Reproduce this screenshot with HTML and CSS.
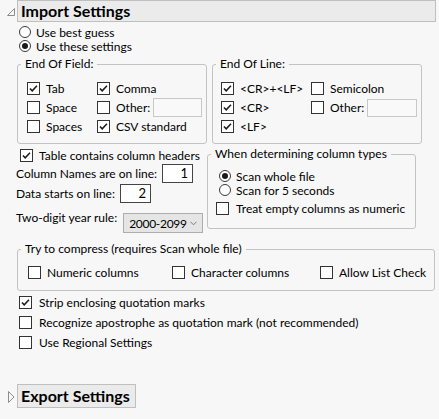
FILE: index.html
```html
<!DOCTYPE html>
<html>
<head>
<meta charset="utf-8">
<link rel="stylesheet" href="styles.css">
</head>
<body>
<div class="outline">
  <span class="tri"><svg width="10" height="22" viewBox="0 0 10 22"><polygon points="7.5,8.5 7.5,15.5 0.5,15.5" fill="none" stroke="#8c8c8c" stroke-width="1"/></svg></span>
  <div class="outline-title">Import Settings</div>
</div>

<div class="content">
  <div class="radio-list">
    <div class="opt"><span class="radio"></span><span>Use best guess</span></div>
    <div class="opt"><span class="radio on"></span><span>Use these settings</span></div>
  </div>

  <div class="top-groups">
    <fieldset class="group eof">
      <legend>End Of Field:</legend>
      <div class="grid eof-grid">
        <div class="cbopt"><span class="cb"><svg viewBox="0 0 13 13"><path d="M2.3 6.4 L5 9.2 L10.6 3.3"/></svg></span><span>Tab</span></div>
        <div class="cbopt"><span class="cb"><svg viewBox="0 0 13 13"><path d="M2.3 6.4 L5 9.2 L10.6 3.3"/></svg></span><span>Comma</span></div>
        <div class="cbopt"><span class="cb"></span><span>Space</span></div>
        <div class="cbopt"><span class="cb"></span><span>Other:</span><span class="txt other"></span></div>
        <div class="cbopt"><span class="cb"></span><span>Spaces</span></div>
        <div class="cbopt"><span class="cb"><svg viewBox="0 0 13 13"><path d="M2.3 6.4 L5 9.2 L10.6 3.3"/></svg></span><span>CSV standard</span></div>
      </div>
    </fieldset>
    <fieldset class="group eol">
      <legend>End Of Line:</legend>
      <div class="grid eol-grid">
        <div class="cbopt"><span class="cb"><svg viewBox="0 0 13 13"><path d="M2.3 6.4 L5 9.2 L10.6 3.3"/></svg></span><span class="ang">&lt;CR&gt;+&lt;LF&gt;</span></div>
        <div class="cbopt"><span class="cb"></span><span>Semicolon</span></div>
        <div class="cbopt"><span class="cb"><svg viewBox="0 0 13 13"><path d="M2.3 6.4 L5 9.2 L10.6 3.3"/></svg></span><span class="ang">&lt;CR&gt;</span></div>
        <div class="cbopt"><span class="cb"></span><span>Other:</span><span class="txt other2"></span></div>
        <div class="cbopt"><span class="cb"><svg viewBox="0 0 13 13"><path d="M2.3 6.4 L5 9.2 L10.6 3.3"/></svg></span><span class="ang">&lt;LF&gt;</span></div>
      </div>
    </fieldset>
  </div>

  <div class="mid">
    <div class="mid-left">
      <div class="cbopt headers"><span class="cb"><svg viewBox="0 0 13 13"><path d="M2.3 6.4 L5 9.2 L10.6 3.3"/></svg></span><span>Table contains column headers</span></div>
      <div class="field"><span>Column Names are on line:</span><span class="num">1</span></div>
      <div class="field"><span>Data starts on line:</span><span class="num">2</span></div>
      <div class="field year"><span class="year-label">Two-digit year rule:</span>
        <span class="select"><span>2000-2099</span><svg width="7" height="5" viewBox="0 0 7 5"><path d="M0.5 0.8 L3.5 3.8 L6.5 0.8" fill="none" stroke="#7a7a7a" stroke-width="1"/></svg></span>
      </div>
    </div>
    <fieldset class="group types">
      <legend>When determining column types</legend>
      <div class="types-body">
        <div class="opt"><span class="radio on"></span><span>Scan whole file</span></div>
        <div class="opt"><span class="radio"></span><span>Scan for 5 seconds</span></div>
        <div class="cbopt treat"><span class="cb"></span><span>Treat empty columns as numeric</span></div>
      </div>
    </fieldset>
  </div>

  <fieldset class="group compress">
    <legend>Try to compress (requires Scan whole file)</legend>
    <div class="compress-body">
      <div class="cbopt"><span class="cb"></span><span>Numeric columns</span></div>
      <div class="cbopt"><span class="cb"></span><span>Character columns</span></div>
      <div class="cbopt"><span class="cb"></span><span>Allow List Check</span></div>
    </div>
  </fieldset>

  <div class="checks">
    <div class="cbopt"><span class="cb"><svg viewBox="0 0 13 13"><path d="M2.3 6.4 L5 9.2 L10.6 3.3"/></svg></span><span>Strip enclosing quotation marks</span></div>
    <div class="cbopt"><span class="cb"></span><span>Recognize apostrophe as quotation mark (not recommended)</span></div>
    <div class="cbopt"><span class="cb"></span><span>Use Regional Settings</span></div>
  </div>
</div>

<div class="outline closed">
  <span class="tri"><svg width="10" height="24" viewBox="0 0 10 24"><polygon points="1.5,7.5 1.5,18.5 7,13" fill="none" stroke="#8c8c8c" stroke-width="1"/></svg></span>
  <div class="outline-title">Export Settings</div>
</div>
</body>
</html>
```

FILE: styles.css
```css
html, body {
  margin: 0;
  padding: 0;
}
body {
  background: #f7f7f7;
  font-family: Lato, "Liberation Sans", sans-serif;
  font-size: 12px;
  color: #000;
  width: 439px;
  height: 419px;
  overflow: hidden;
}

/* outline headers */
.outline {
  display: flex;
  align-items: stretch;
  padding-left: 7px;
  height: 22px;
}
.tri {
  width: 10px;
  display: block;
}
.tri svg { display: block; }
.outline-title {
  flex: 1;
  margin-right: 3px;
  box-sizing: border-box;
  border: 1px solid #bfbfbf;
  background: #ebebeb;
  font-weight: bold;
  font-size: 16px;
  line-height: 20px;
  padding-left: 3px;
}
.outline.closed {
  margin-top: 32px;
  height: 24px;
}
.outline.closed .outline-title {
  flex: none;
  width: 119px;
  line-height: 22px;
}

.content {
  padding-left: 17px;
}

/* radios */
.radio-list {
  margin-top: 3px;
}
.opt {
  display: flex;
  align-items: center;
  height: 14px;
  gap: 5px;
  margin-left: 2px;
}
.radio {
  width: 12px;
  height: 12px;
  box-sizing: border-box;
  border: 1px solid #3a3a3a;
  border-radius: 50%;
  background: #fff;
  display: flex;
  align-items: center;
  justify-content: center;
  flex: none;
}
.radio.on::after {
  content: "";
  width: 6px;
  height: 6px;
  border-radius: 50%;
  background: #1a1a1a;
}

/* checkbox */
.cbopt {
  display: flex;
  align-items: center;
  gap: 6px;
}
.cb {
  width: 13px;
  height: 13px;
  box-sizing: border-box;
  border: 1px solid #333;
  background: #fff;
  flex: none;
  display: block;
}
.cb svg {
  display: block;
  width: 11px;
  height: 11px;
  fill: none;
  stroke: #1a1a1a;
  stroke-width: 1.8;
}

/* group boxes */
fieldset.group {
  margin: 0;
  padding: 0;
  border: 1px solid #c3c3c3;
  border-radius: 3px;
  min-width: 0;
  box-sizing: border-box;
}
fieldset.group legend {
  margin-left: 3px;
  padding: 0 4px;
  line-height: 14px;
  height: 14px;
}

.top-groups {
  display: flex;
  gap: 5px;
  margin-top: 4px;
}
fieldset.eof { width: 190px; }
fieldset.eol { width: 210px; }
.grid {
  display: grid;
  grid-auto-rows: 19px;
  align-items: center;
  padding: 8px 0 7px 0;
}
.eof-grid {
  grid-template-columns: 70px auto;
  padding-left: 9px;
}
.eol-grid {
  grid-template-columns: 90px auto;
  padding-left: 8px;
}
.txt {
  display: block;
  height: 19px;
  box-sizing: border-box;
  border: 1px solid #c8c8c8;
  background: #f9f9f9;
}
.other { width: 49px; margin-left: -3px; }
.other2 { width: 50px; margin-left: -3px; height: 18px; }

/* middle */
.mid {
  display: flex;
  align-items: flex-start;
  margin-top: 3px;
}
.mid-left {
  width: 190px;
}
.headers {
  height: 16px;
  margin-left: 3px;
}
.field {
  display: flex;
  align-items: center;
  gap: 5px;
  height: 19px;
  margin-top: 1px;
  margin-left: -1px;
}
.num {
  display: block;
  width: 31px;
  height: 19px;
  box-sizing: border-box;
  border: 1px solid #444;
  background: #fff;
  text-align: right;
  padding-right: 4px;
  line-height: 17px;
  font-size: 13px;
}
.field.year {
  align-items: flex-start;
  margin-top: 7px;
  height: 23px;
  gap: 6px;
}
.year-label {
  line-height: 16px;
}
.select {
  margin-top: 3px;
  width: 80px;
  height: 20px;
  box-sizing: border-box;
  border: 1px solid #adadad;
  background: #e5e5e5;
  display: flex;
  align-items: center;
  justify-content: space-between;
  padding: 1px 5px 0 5px;
  white-space: nowrap;
  letter-spacing: -0.3px;
}

fieldset.types {
  width: 209px;
}
.types-body {
  padding: 8px 0 12px 9px;
}
.treat {
  height: 15px;
  margin-top: 4px;
  margin-left: -1px;
  gap: 7px;
}

/* compress */
fieldset.compress {
  width: 418px;
  margin-top: 9px;
}
.compress-body {
  display: grid;
  grid-template-columns: 144px 148px auto;
  align-items: center;
  height: 16px;
  padding: 8px 0 10px 10px;
}

/* bottom checks */
.checks {
  margin-top: 1px;
}
.checks .cbopt {
  height: 20px;
  margin-left: 2px;
  gap: 7px;
}
```
